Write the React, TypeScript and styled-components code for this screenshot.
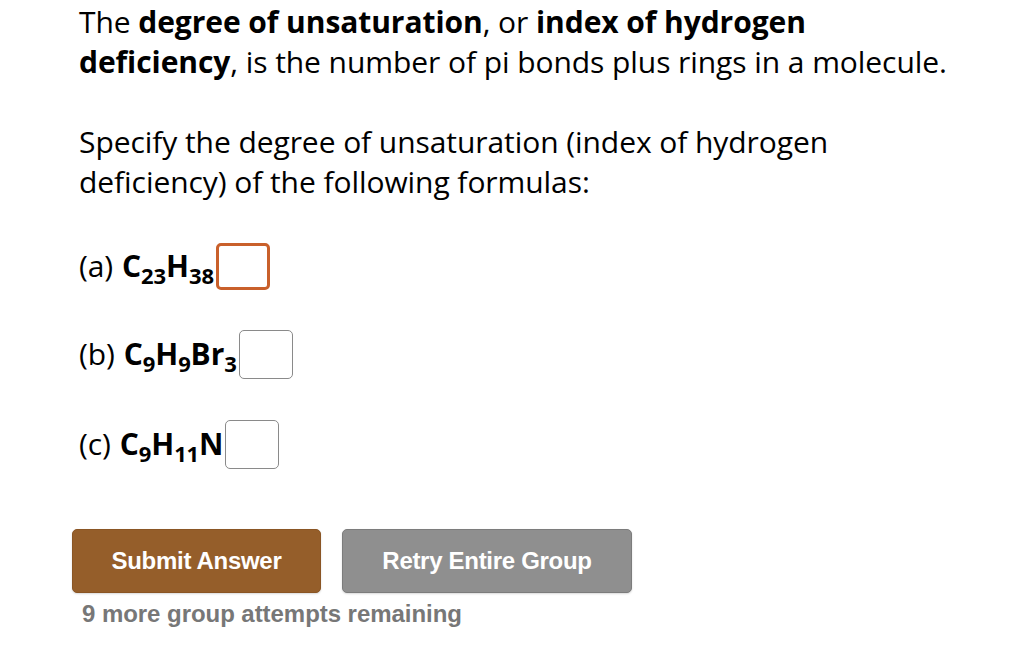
import React from "react";
import styled, { createGlobalStyle } from "styled-components";

const Global = createGlobalStyle`
  html, body { margin: 0; padding: 0; background: #fff; }
  body { font-family: "Open Sans", "Liberation Sans", sans-serif; color: #000; }
`;

const Page = styled.div`
  padding: 2px 0 0 79px;
  width: 1024px;
  box-sizing: border-box;
`;

const Para = styled.p<{ $mb?: number }>`
  margin: 0 0 ${(p) => p.$mb ?? 0}px 0;
  font-size: 30px;
  line-height: 40px;
  letter-spacing: -0.07px;
  white-space: nowrap;
`;

const Row = styled.div<{ $mt: number }>`
  display: flex;
  align-items: center;
  height: 48px;
  margin-top: ${(p) => p.$mt}px;
  font-size: 30px;
  line-height: 40px;
  letter-spacing: -0.1px;
`;

const Formula = styled.span`
  font-weight: 700;
  margin-left: 9px;
`;

const Sub = styled.sub`
  font-size: 22px;
  vertical-align: -7px;
  line-height: 0;
`;

const Box = styled.div<{ $active?: boolean }>`
  box-sizing: border-box;
  width: 54px;
  height: ${(p) => (p.$active ? 47 : 49)}px;
  border: ${(p) => (p.$active ? "3px solid #c9602b" : "1.5px solid #8a8a8a")};
  border-radius: 5px;
  margin-left: 2px;
  background: #fff;
`;

const Buttons = styled.div`
  display: flex;
  gap: 21px;
  margin-top: 61px;
  margin-left: -7px;
`;

const Button = styled.button<{ $variant: "primary" | "secondary" }>`
  height: 64px;
  padding: 0;
  width: ${(p) => (p.$variant === "primary" ? 249 : 290)}px;
  border-radius: 5px;
  border: 1px solid ${(p) => (p.$variant === "primary" ? "#8a5524" : "#7c7c7c")};
  background: ${(p) => (p.$variant === "primary" ? "#955e2a" : "#8f8f8f")};
  color: #fff;
  font-family: "Liberation Sans", Arial, sans-serif;
  font-weight: 700;
  font-size: 24px;
  letter-spacing: -0.3px;
  box-shadow: 0 1px 2px rgba(0, 0, 0, 0.15);
`;

const Attempts = styled.div`
  margin-top: 7px;
  margin-left: 3px;
  font-family: "Liberation Sans", Arial, sans-serif;
  font-weight: 700;
  font-size: 24px;
  color: #777;
  letter-spacing: -0.05px;
`;

export default function App() {
  return (
    <>
      <Global />
      <Page>
        <Para $mb={40}>
          The <b>degree of unsaturation</b>, or <b>index of hydrogen</b>
          <br />
          <b>deficiency</b>, is the number of pi bonds plus rings in a molecule.
        </Para>
        <Para>
          Specify the degree of unsaturation (index of hydrogen
          <br />
          deficiency) of the following formulas:
        </Para>
        <Row $mt={40}>
          (a)
          <Formula>
            C<Sub>23</Sub>H<Sub>38</Sub>
          </Formula>
          <Box $active />
        </Row>
        <Row $mt={40}>
          (b)
          <Formula>
            C<Sub>9</Sub>H<Sub>9</Sub>Br<Sub>3</Sub>
          </Formula>
          <Box />
        </Row>
        <Row $mt={42}>
          (c)
          <Formula>
            C<Sub>9</Sub>H<Sub>11</Sub>N
          </Formula>
          <Box />
        </Row>
        <Buttons>
          <Button $variant="primary">Submit Answer</Button>
          <Button $variant="secondary">Retry Entire Group</Button>
        </Buttons>
        <Attempts>9 more group attempts remaining</Attempts>
      </Page>
    </>
  );
}
